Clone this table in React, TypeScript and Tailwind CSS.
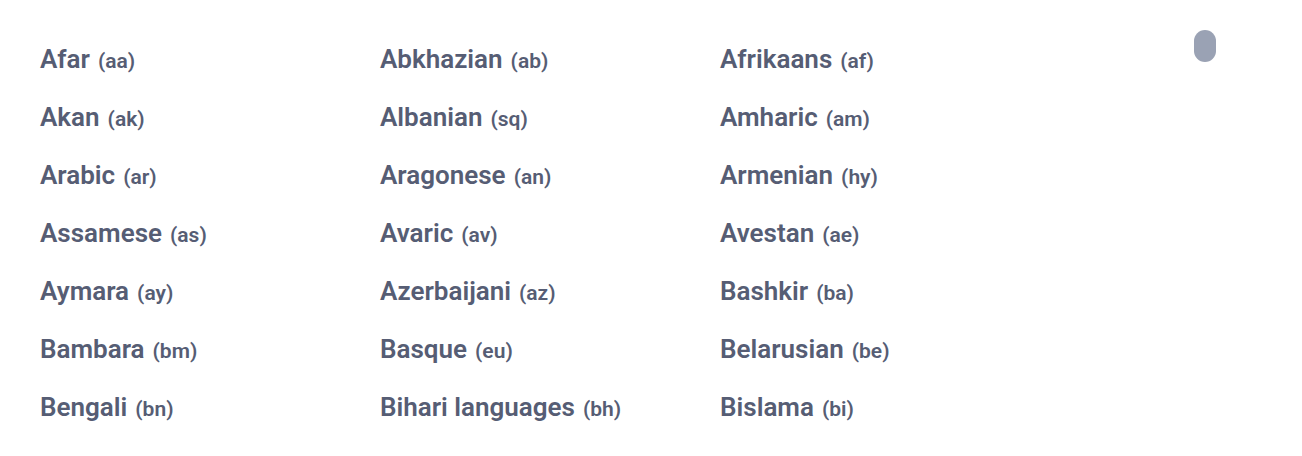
const languages: [string, string][] = [
	['Afar', 'aa'],
	['Abkhazian', 'ab'],
	['Afrikaans', 'af'],
	['Akan', 'ak'],
	['Albanian', 'sq'],
	['Amharic', 'am'],
	['Arabic', 'ar'],
	['Aragonese', 'an'],
	['Armenian', 'hy'],
	['Assamese', 'as'],
	['Avaric', 'av'],
	['Avestan', 'ae'],
	['Aymara', 'ay'],
	['Azerbaijani', 'az'],
	['Bashkir', 'ba'],
	['Bambara', 'bm'],
	['Basque', 'eu'],
	['Belarusian', 'be'],
	['Bengali', 'bn'],
	['Bihari languages', 'bh'],
	['Bislama', 'bi'],
]

export default function App() {
	return (
		<div
			className="relative w-[1302px] h-[456px] bg-white overflow-hidden text-[#565d74]"
			style={{ fontFamily: 'Roboto, "Liberation Sans", sans-serif' }}
		>
			<div className="grid grid-cols-[340px_340px_340px] pl-10 pt-[30px]">
				{languages.map(([name, code]) => (
					<div key={code} className="h-[58px] flex items-center whitespace-nowrap">
						<div className="flex items-baseline">
							<span className="text-[26px] font-semibold">{name}</span>
							<span className="ml-[8px] text-[21px] font-semibold">({code})</span>
						</div>
					</div>
				))}
			</div>
			{/* scroll thumb */}
			<div className="absolute left-[1194px] top-[30px] w-[22px] h-[32px] rounded-full bg-[#9aa2b4]" />
		</div>
	)
}
